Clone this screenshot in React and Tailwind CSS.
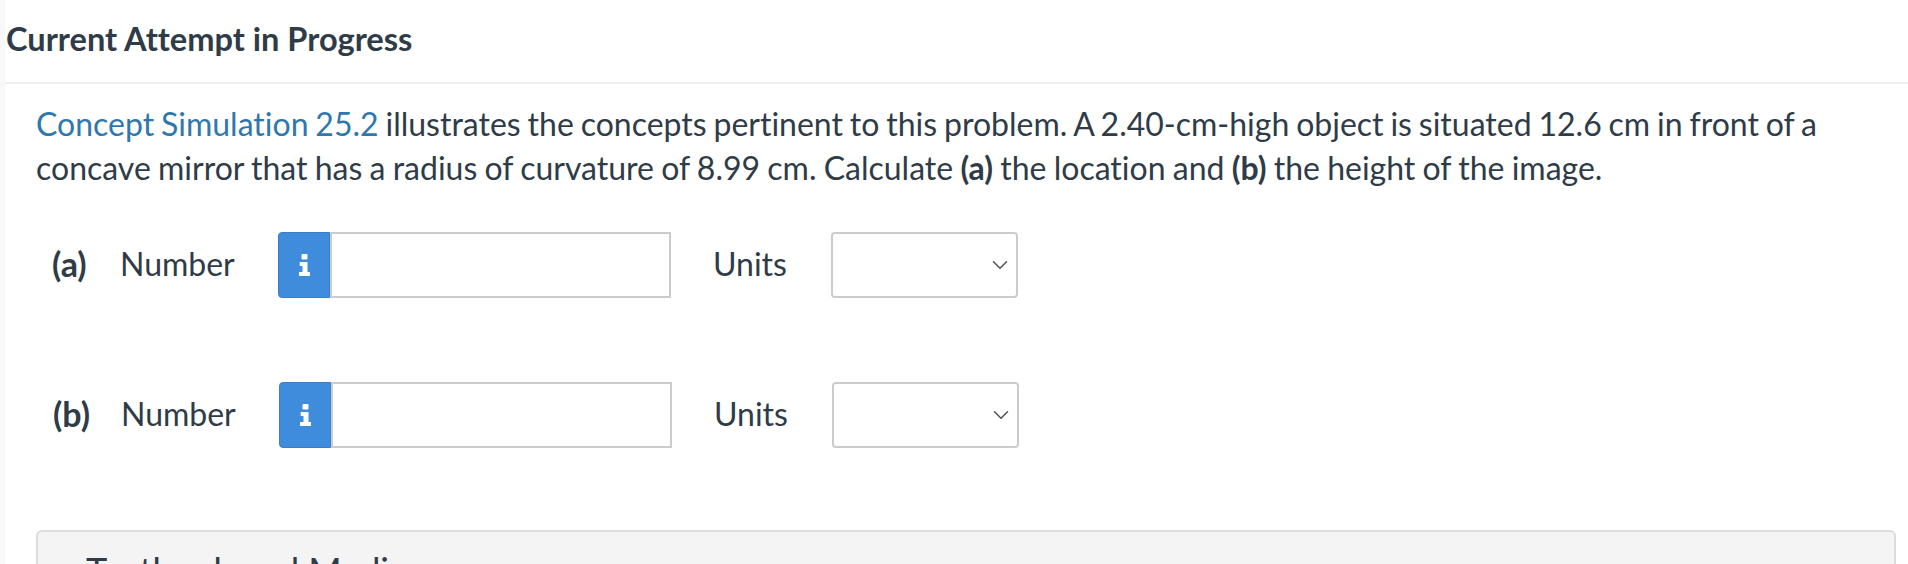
import React from "react";
import { ChevronDown } from "lucide-react";

function Row({ label, shift }) {
  return (
    <div className={`flex items-center h-[66px] ${shift}`}>
      <span className="w-[68px] pb-[2px] font-bold text-[34px] flex-none">{label}</span>
      <span className="w-[158px] pb-[2px] flex-none">Number</span>
      <div className="w-[52px] h-[66px] flex-none bg-[#3f8cdd] border border-[#3a7fc8] rounded-l-[4px] flex items-center justify-center">
        <svg width="11" height="22" viewBox="0 0 11 22" fill="#fff">
          <rect x="2.5" y="0" width="6" height="5.5" rx="1" />
          <path d="M0.7 8h7.8v10H11v4H0v-4h3.5v-6H0.7z" />
        </svg>
      </div>
      <div className="w-[341px] h-[66px] flex-none border-2 border-[#cccccc] bg-white" />
      <span className="ml-[42px] w-[118px] pb-[2px] flex-none">Units</span>
      <div className="w-[187px] h-[66px] flex-none border-2 border-[#cccccc] rounded-[4px] bg-white flex items-center justify-end pr-[3px]">
        <ChevronDown size={26} strokeWidth={1.4} className="text-[#555555]" />
      </div>
    </div>
  );
}

export default function App() {
  return (
    <div className="w-[1908px] h-[564px] overflow-hidden bg-[#f8f8f8] pl-[5px] text-[32px] leading-[44px] text-[#2f3c48] font-['Lato','Noto_Sans',sans-serif] [font-variant-ligatures:none] [word-spacing:-1.31px]">
      <div className="bg-white h-[564px] flex flex-col">
        <div className="h-[84px] flex-none border-b-2 border-[#eeeeee] pl-[1px] pt-[17px] font-bold text-[32.6px] [word-spacing:0px]">Current Attempt in Progress</div>
        <div className="pl-[31px] pr-[12px] pt-[18px] flex-none">
          <p className="w-[1830px]">
            <span className="text-[#2f78ad]">Concept Simulation 25.2</span> illustrates the concepts pertinent to this problem. A 2.40-cm-high object is situated 12.6 cm in front of a <span className="[word-spacing:-0.97px]">concave mirror that has a radius of curvature of 8.99 cm. Calculate <b>(a)</b> the location and <b>(b)</b> the height of the image.</span>
          </p>
          <div className="pl-[16px] pt-[42px] flex flex-col gap-[84px]">
            <Row label="(a)" shift="" />
            <Row label="(b)" shift="ml-[1px]" />
          </div>
          <div className="mt-[82px] w-[1860px] h-[120px] bg-[#f4f4f4] border-2 border-[#dddddd] rounded-[6px] pl-[48px] pt-[16px] text-[36px] [word-spacing:0px]">Textbook and Media</div>
        </div>
      </div>
    </div>
  );
}
